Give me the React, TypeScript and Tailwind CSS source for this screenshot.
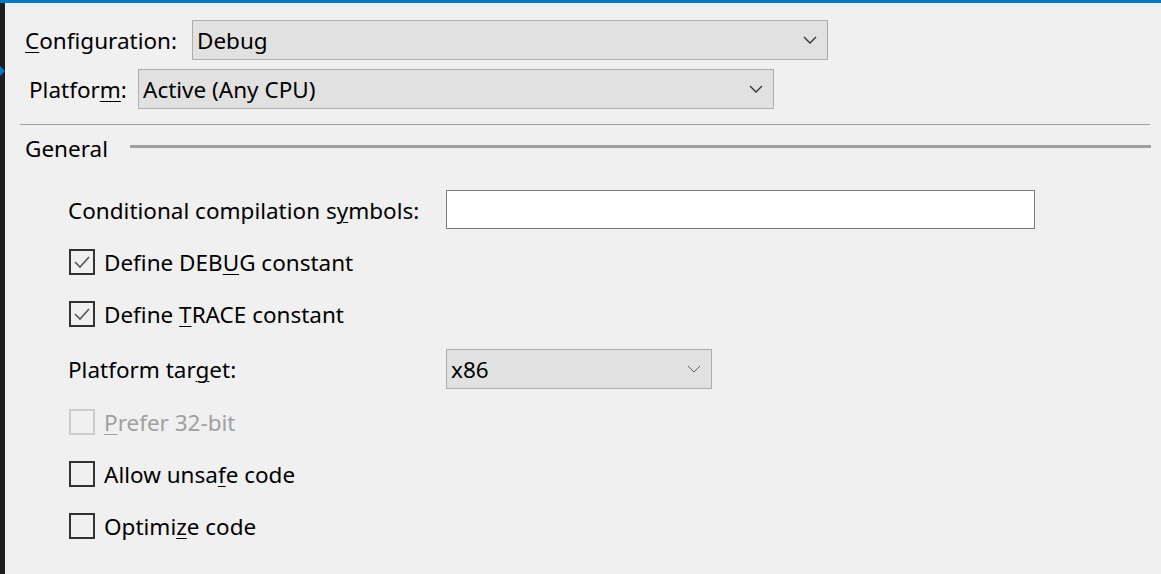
import React from 'react'

const font = { fontFamily: '"Noto Sans", "Open Sans", sans-serif' }

function Chevron({ light = false }: { light?: boolean }) {
  return (
    <svg width="14" height="8" viewBox="0 0 14 8" className="shrink-0">
      <path
        d="M1 1 L7 7 L13 1"
        fill="none"
        stroke={light ? '#606060' : '#333333'}
        strokeWidth={light ? 1 : 1.4}
      />
    </svg>
  )
}

function Select({ value, width, light }: { value: string; width: string; light?: boolean }) {
  return (
    <div
      className={`flex h-[40px] items-center justify-between border border-[#adadad] bg-[#e1e1e1] pl-[4px] pr-[10px] ${width}`}
    >
      <span className="pt-[3px] text-[22.5px] leading-none text-black">{value}</span>
      <Chevron light={light} />
    </div>
  )
}

function Checkbox({ checked, disabled, children }: { checked?: boolean; disabled?: boolean; children: React.ReactNode }) {
  return (
    <div className="flex h-[52px] items-center pl-[64px]">
      <span
        className={`flex h-[26px] w-[26px] items-center justify-center border-2 ${
          disabled ? 'border-[#cccccc] bg-[#f0f0f0]' : 'border-[#333333]'
        }`}
      >
        {checked && (
          <svg width="18" height="14" viewBox="0 0 18 14">
            <path d="M2 7 L7 12 L16 2" fill="none" stroke="#555555" strokeWidth="1.6" />
          </svg>
        )}
      </span>
      <span
        className={`ml-[9px] pt-[3px] text-[22.5px] leading-none ${disabled ? 'text-[#a0a0a0]' : 'text-black'}`}
      >
        {children}
      </span>
    </div>
  )
}

const U = ({ children }: { children: React.ReactNode }) => (
  <span className="underline decoration-1 underline-offset-[3px]">{children}</span>
)

export default function App() {
  return (
    <div className="flex h-[574px] w-[1161px] flex-col overflow-hidden bg-[#f0f0f0]" style={font}>
      <div className="h-[3px] w-full shrink-0 bg-[#007acc]" />
      <div className="flex flex-1">
        {/* left tool-window strip */}
        <div className="flex w-[5px] shrink-0 flex-col bg-[#1e1e1e]">
          <svg width="5" height="10" viewBox="0 0 5 10" className="mt-[63px]">
            <path d="M0 0 L5 5 L0 10 Z" fill="#007acc" />
          </svg>
        </div>

        <div className="flex flex-1 flex-col">
          {/* Configuration */}
          <div className="mt-[17px] flex h-[40px] items-center pl-[20px]">
            <span className="w-[167px] pt-[3px] text-[22.5px] leading-none text-black">
              <U>C</U>onfiguration:
            </span>
            <Select value="Debug" width="w-[636px]" />
          </div>

          {/* Platform */}
          <div className="mt-[9px] flex h-[40px] items-center pl-[24px]">
            <span className="w-[109px] pt-[3px] text-[22.5px] leading-none text-black">
              Platfor<U>m</U>:
            </span>
            <Select value="Active (Any CPU)" width="w-[636px]" />
          </div>

          <div className="ml-[15px] mt-[15px] h-px w-[1130px] shrink-0 bg-[#a0a0a0]" />

          {/* General header */}
          <div className="mt-[6px] flex h-[32px] items-center pl-[20px]">
            <span className="w-[105px] pt-[4px] text-[22.5px] leading-none text-black">General</span>
            <div className="mt-[-2px] h-[3px] w-[1021px] bg-[#a0a0a0]" />
          </div>

          {/* Conditional compilation symbols */}
          <div className="mt-[27px] flex h-[39px] items-center pl-[63px]">
            <span className="w-[378px] pt-[3px] text-[22.5px] leading-none text-black">
              Conditional compilation s<U>y</U>mbols:
            </span>
            <div className="h-[39px] w-[589px] border border-[#7a7a7a] bg-white" />
          </div>

          <div className="mt-[7px]">
            <Checkbox checked>
              Define DEB<U>U</U>G constant
            </Checkbox>
            <Checkbox checked>
              Define <U>T</U>RACE constant
            </Checkbox>
          </div>

          {/* Platform target */}
          <div className="mt-[9px] flex h-[40px] items-center pl-[63px]">
            <span className="w-[378px] pt-[3px] text-[22.5px] leading-none text-black">
              Platform tar<U>g</U>et:
            </span>
            <Select value="x86" width="w-[266px]" light />
          </div>

          <div className="mt-[7px]">
            <Checkbox disabled>
              <U>P</U>refer 32-bit
            </Checkbox>
            <Checkbox>
              Allow unsa<U>f</U>e code
            </Checkbox>
            <Checkbox>
              Optimi<U>z</U>e code
            </Checkbox>
          </div>
        </div>
      </div>
    </div>
  )
}
